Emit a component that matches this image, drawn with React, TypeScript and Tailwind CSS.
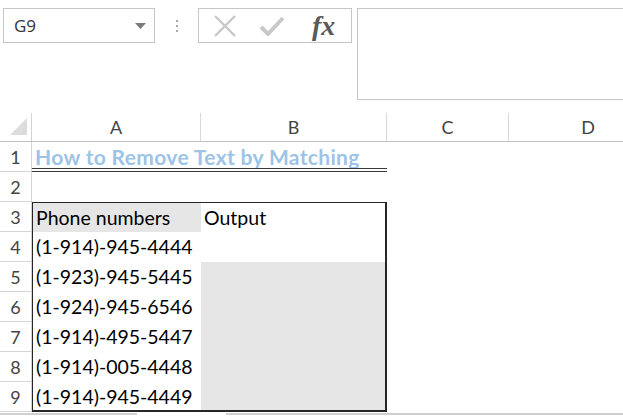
import React from 'react';

const cellFont = { fontFamily: 'Lato, "Open Sans", sans-serif' };

type Row = {
  n: number;
  a?: string;
  b?: string;
  aCls: string;
  bCls: string;
};

const rows: Row[] = [
  {
    n: 1,
    a: 'How to Remove Text by Matching',
    aCls: 'border-b-4 border-double border-[#3a3a3a] font-bold text-[21px] tracking-[0.35px] text-[#9dc3e6] whitespace-nowrap overflow-visible',
    bCls: 'border-b-4 border-double border-[#3a3a3a]',
  },
  { n: 2, aCls: '', bCls: '' },
  {
    n: 3,
    a: 'Phone numbers',
    b: 'Output',
    aCls: 'bg-[#e7e6e6] border-t border-l border-[#262626]',
    bCls: 'border-t border-r-2 border-[#262626]',
  },
  { n: 4, a: '(1-914)-945-4444', aCls: 'border-l border-[#262626]', bCls: 'border-r-2 border-[#262626]' },
  { n: 5, a: '(1-923)-945-5445', aCls: 'border-l border-[#262626]', bCls: 'bg-[#e6e6e6] border-r-2 border-[#262626]' },
  { n: 6, a: '(1-924)-945-6546', aCls: 'border-l border-[#262626]', bCls: 'bg-[#e6e6e6] border-r-2 border-[#262626]' },
  { n: 7, a: '(1-914)-495-5447', aCls: 'border-l border-[#262626]', bCls: 'bg-[#e6e6e6] border-r-2 border-[#262626]' },
  { n: 8, a: '(1-914)-005-4448', aCls: 'border-l border-[#262626]', bCls: 'bg-[#e6e6e6] border-r-2 border-[#262626]' },
  {
    n: 9,
    a: '(1-914)-945-4449',
    aCls: 'border-l border-b-2 border-[#262626]',
    bCls: 'bg-[#e6e6e6] border-r-2 border-b-2 border-[#262626]',
  },
];

const App: React.FC = () => {
  return (
    <div className="w-[623px] h-[417px] bg-white overflow-hidden relative">
      {/* formula bar area */}
      <div className="h-[113px] flex items-start pt-[8px]">
        <div
          className="ml-[3px] w-[152px] h-[35px] border border-[#c6c6c6] flex items-center justify-between pl-[10px] pr-[8px] text-[17px] text-[#333]"
          style={{ fontFamily: '"Open Sans", sans-serif' }}
        >
          <span>G9</span>
          <svg width="11" height="6" viewBox="0 0 11 6">
            <path d="M0 0 L11 0 L5.5 6 Z" fill="#7a7a7a" />
          </svg>
        </div>
        <div className="w-[43px] h-[35px] flex flex-col items-center justify-center gap-[3px]">
          <span className="w-[2px] h-[2px] bg-[#a8a8a8]" />
          <span className="w-[2px] h-[2px] bg-[#a8a8a8]" />
          <span className="w-[2px] h-[2px] bg-[#a8a8a8]" />
        </div>
        <div className="w-[154px] h-[35px] border border-[#c6c6c6] flex items-center pl-[14px]">
          <svg width="24" height="22" viewBox="0 0 24 22">
            <path d="M2 1 L22 21 M22 1 L2 21" stroke="#c8c8c8" strokeWidth="2.4" fill="none" />
          </svg>
          <svg className="ml-[23px]" width="24" height="20" viewBox="0 0 24 20">
            <path d="M1 11 L8 18 L23 2" stroke="#c8c8c8" strokeWidth="4" fill="none" />
          </svg>
          <span
            className="ml-[28px] italic font-bold text-[28px] leading-none text-[#5a5a5a]"
            style={{ fontFamily: '"Liberation Serif", serif' }}
          >
            fx
          </span>
        </div>
        <div className="ml-[5px] flex-1 h-[92px] border border-r-0 border-[#c6c6c6]" />
      </div>

      {/* column headers */}
      <div
        className="flex h-[29px] border-b border-[#c0c0c0] text-[18px] text-[#444]"
        style={{ fontFamily: 'Lato, sans-serif' }}
      >
        <div className="w-[32px] shrink-0 border-r border-[#d4d4d4] relative">
          <svg className="absolute left-[10px] top-[5px]" width="17" height="17" viewBox="0 0 17 17">
            <path d="M17 0 L17 17 L0 17 Z" fill="#dcdcdc" />
          </svg>
        </div>
        <div className="w-[169px] shrink-0 border-r border-[#d8d8d8] flex items-center justify-center">A</div>
        <div className="w-[186px] shrink-0 border-r border-[#d8d8d8] flex items-center justify-center">B</div>
        <div className="w-[122px] shrink-0 border-r border-[#d8d8d8] flex items-center justify-center">C</div>
        <div className="w-[158px] shrink-0 flex items-center justify-center">D</div>
      </div>

      {/* rows */}
      <div className="text-[19.5px] text-black" style={cellFont}>
        {rows.map((r) => (
          <div key={r.n} className="flex h-[30px]">
            <div className="w-[32px] border-r border-b border-[#d4d4d4] flex items-center justify-center pt-[1px] text-[18px] text-[#444]">
              {r.n}
            </div>
            <div className={`w-[169px] h-[30px] leading-[30px] pl-[3px] ${r.aCls}`}>{r.a}</div>
            <div className={`w-[186px] h-[30px] leading-[30px] pl-[3px] ${r.bCls}`}>{r.b}</div>
            <div className="flex-1" />
          </div>
        ))}
      </div>

      {/* sheet tab strip */}
      <div className="flex h-[4px] mt-[1px]">
        <div className="w-[137px] border-t-2 border-[#d0d0d0]" />
        <div className="w-[89px]" />
        <div className="flex-1 border-t-2 border-[#d0d0d0]" />
      </div>
    </div>
  );
};

export default App;
